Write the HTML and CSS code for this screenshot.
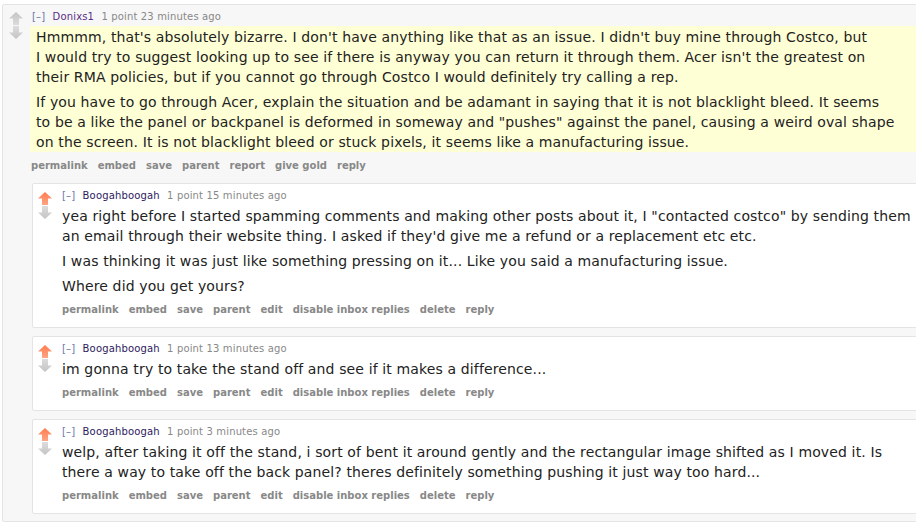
FILE: index.html
```html
<!DOCTYPE html>
<html>
<head>
<meta charset="utf-8">
<link rel="stylesheet" href="styles.css">
</head>
<body>
<div class="comment top">
  <div class="midcol">
    <svg class="arrow" viewBox="0 0 14 13"><defs><linearGradient id="gu" x1="0" y1="0" x2="0" y2="1"><stop offset="0" stop-color="#c4c4c4"/><stop offset="1" stop-color="#dcdcdc"/></linearGradient><linearGradient id="gd" x1="0" y1="0" x2="0" y2="1"><stop offset="0" stop-color="#dcdcdc"/><stop offset="1" stop-color="#c4c4c4"/></linearGradient><linearGradient id="ou1" x1="0" y1="0" x2="0" y2="1"><stop offset="0" stop-color="#ff7c4e"/><stop offset="1" stop-color="#ffa585"/></linearGradient></defs><path d="M7 0 L14 6.5 L10 6.5 L10 13 L4 13 L4 6.5 L0 6.5 Z" fill="url(#gu)"/></svg>
    <svg class="arrow" viewBox="0 0 14 13"><path d="M4 0 L10 0 L10 6.5 L14 6.5 L7 13 L0 6.5 L4 6.5 Z" fill="url(#gd)"/></svg>
  </div>
  <div class="entry">
    <p class="tagline"><span class="expand">[–]</span> <span class="author a1">Donixs1</span> <span class="score">1 point 23 minutes ago</span></p>
    <div class="usertext hl">
      <div class="md">
        <p>Hmmmm, that's absolutely bizarre. I don't have anything like that as an issue. I didn't buy mine through Costco, but<br>I would try to suggest looking up to see if there is anyway you can return it through them. Acer isn't the greatest on<br>their RMA policies, but if you cannot go through Costco I would definitely try calling a rep.</p>
        <p>If you have to go through Acer, explain the situation and be adamant in saying that it is not blacklight bleed. It seems<br>to be a like the panel or backpanel is deformed in someway and "pushes" against the panel, causing a weird oval shape<br>on the screen. It is not blacklight bleed or stuck pixels, it seems like a manufacturing issue.</p>
      </div>
    </div>
    <ul class="buttons"><li>permalink</li><li>embed</li><li>save</li><li>parent</li><li>report</li><li>give gold</li><li>reply</li></ul>

    <div class="children">
      <div class="comment child">
        <div class="midcol">
          <svg class="arrow" viewBox="0 0 14 13"><path d="M7 0 L14 6.5 L10 6.5 L10 13 L4 13 L4 6.5 L0 6.5 Z" fill="url(#ou1)"/></svg>
          <svg class="arrow" viewBox="0 0 14 13"><path d="M4 0 L10 0 L10 6.5 L14 6.5 L7 13 L0 6.5 L4 6.5 Z" fill="url(#gd)"/></svg>
        </div>
        <div class="entry">
          <p class="tagline"><span class="expand">[–]</span> <span class="author">Boogahboogah</span> <span class="score">1 point 15 minutes ago</span></p>
          <div class="usertext">
            <div class="md">
              <p>yea right before I started spamming comments and making other posts about it, I "contacted costco" by sending them<br>an email through their website thing. I asked if they'd give me a refund or a replacement etc etc.</p>
              <p>I was thinking it was just like something pressing on it... Like you said a manufacturing issue.</p>
              <p>Where did you get yours?</p>
            </div>
          </div>
          <ul class="buttons"><li>permalink</li><li>embed</li><li>save</li><li>parent</li><li>edit</li><li>disable inbox replies</li><li>delete</li><li>reply</li></ul>
        </div>
      </div>

      <div class="comment child">
        <div class="midcol">
          <svg class="arrow" viewBox="0 0 14 13"><path d="M7 0 L14 6.5 L10 6.5 L10 13 L4 13 L4 6.5 L0 6.5 Z" fill="url(#ou1)"/></svg>
          <svg class="arrow" viewBox="0 0 14 13"><path d="M4 0 L10 0 L10 6.5 L14 6.5 L7 13 L0 6.5 L4 6.5 Z" fill="url(#gd)"/></svg>
        </div>
        <div class="entry">
          <p class="tagline"><span class="expand">[–]</span> <span class="author">Boogahboogah</span> <span class="score">1 point 13 minutes ago</span></p>
          <div class="usertext">
            <div class="md">
              <p>im gonna try to take the stand off and see if it makes a difference...</p>
            </div>
          </div>
          <ul class="buttons"><li>permalink</li><li>embed</li><li>save</li><li>parent</li><li>edit</li><li>disable inbox replies</li><li>delete</li><li>reply</li></ul>
        </div>
      </div>

      <div class="comment child">
        <div class="midcol">
          <svg class="arrow" viewBox="0 0 14 13"><path d="M7 0 L14 6.5 L10 6.5 L10 13 L4 13 L4 6.5 L0 6.5 Z" fill="url(#ou1)"/></svg>
          <svg class="arrow" viewBox="0 0 14 13"><path d="M4 0 L10 0 L10 6.5 L14 6.5 L7 13 L0 6.5 L4 6.5 Z" fill="url(#gd)"/></svg>
        </div>
        <div class="entry">
          <p class="tagline"><span class="expand">[–]</span> <span class="author">Boogahboogah</span> <span class="score">1 point 3 minutes ago</span></p>
          <div class="usertext">
            <div class="md">
              <p>welp, after taking it off the stand, i sort of bent it around gently and the rectangular image shifted as I moved it. Is<br>there a way to take off the back panel? theres definitely something pushing it just way too hard...</p>
            </div>
          </div>
          <ul class="buttons"><li>permalink</li><li>embed</li><li>save</li><li>parent</li><li>edit</li><li>disable inbox replies</li><li>delete</li><li>reply</li></ul>
        </div>
      </div>
    </div>
  </div>
</div>
</body>
</html>
```
FILE: styles.css
```css
html, body {
  margin: 0;
  padding: 0;
  background: #ffffff;
  overflow: hidden;
}
body {
  font-family: "DejaVu Sans", Verdana, sans-serif;
  color: #222222;
}
.comment {
  display: flex;
  align-items: flex-start;
  border: 1px solid #e4e4e4;
  border-radius: 2px;
}
.top {
  margin: 4px -12px 0 2px;
  background: #f7f7f7;
  padding: 4px 0 7px 0;
}
.top > .midcol {
  width: 27px;
  padding-left: 6px;
  padding-top: 3px;
  box-sizing: border-box;
}
.midcol {
  display: flex;
  flex-direction: column;
  gap: 1px;
  flex: none;
}
.arrow {
  width: 14px;
  height: 13px;
  display: block;
}
.entry {
  flex: 1;
  min-width: 0;
}
.tagline {
  margin: 0;
  font-size: 10px;
  line-height: 16px;
  letter-spacing: 0.15px;
  color: #888888;
  padding-left: 2px;
}
.expand {
  color: #6a76a8;
  margin-right: 4px;
}
.author {
  color: #2d1a5e;
  margin-right: 4px;
}
.author.a1 {
  color: #5a2d86;
}
.usertext {
  margin-top: 1px;
}
.usertext.hl {
  background: #ffffd6;
  padding: 1px 6px 0 6px;
}
.md {
  max-width: 880px;
  font-size: 14px;
  line-height: 20px;
  letter-spacing: 0.13px;
}
.md p {
  margin: 0 0 5px 0;
}
.md p:last-child {
  margin-bottom: 0;
}
.buttons {
  list-style: none;
  margin: 0;
  padding: 6px 0 0 1px;
  display: flex;
  font-size: 10px;
  font-weight: bold;
  line-height: 16px;
  color: #888888;
}
.buttons li {
  margin-right: 10px;
}
.children {
  margin-top: 9px;
  margin-left: 2px;
  display: flex;
  flex-direction: column;
  gap: 8px;
}
.child {
  background: #ffffff;
  padding: 4px 0 9px 0;
}
.child > .midcol {
  width: 29px;
  padding-left: 5px;
  padding-top: 4px;
  box-sizing: border-box;
}
.child .usertext {
  margin-top: 2px;
}
.child .tagline {
  padding-left: 0;
}
.child .buttons {
  padding-left: 0;
}
```
